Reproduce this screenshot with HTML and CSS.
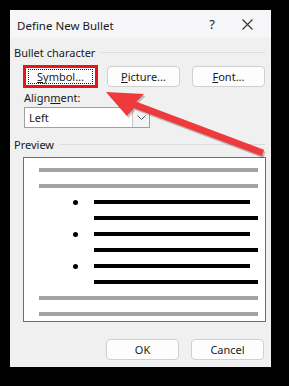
FILE: index.html
```html
<!DOCTYPE html>
<html lang="en">
  <head>
    <meta charset="UTF-8" />
    <title>Define New Bullet</title>
    <link rel="stylesheet" href="styles.css">
  </head>

  <body>
    <div class="dialog">
      <div class="titlebar">
        <span class="title">Define New Bullet</span>
        <span class="help">?</span>
        <span class="close">
          <svg width="11" height="11" viewBox="0 0 11 11">
            <path d="M0.5 0.5 L10.5 10.5 M10.5 0.5 L0.5 10.5" stroke="#333" stroke-width="1.1" fill="none" />
          </svg>
        </span>
      </div>

      <div class="content">
        <div class="group-head">
          <span>Bullet character</span>
          <span class="rule"></span>
        </div>

        <div class="btn-row">
          <div class="marked">
            <button class="btn focused"><span class="focus-ring"><u>S</u>ymbol...</span></button>
          </div>
          <button class="btn"><u>P</u>icture...</button>
          <button class="btn"><u>F</u>ont...</button>
        </div>

        <div class="align">
          <label>Align<u>m</u>ent:</label>
          <div class="select">
            <span class="select-text">Left</span>
            <span class="select-arrow">
              <svg width="9" height="6" viewBox="0 0 9 6">
                <path d="M0.5 0.5 L4.5 4.5 L8.5 0.5" stroke="#555" stroke-width="1" fill="none" />
              </svg>
            </span>
          </div>
        </div>

        <div class="group-head preview-head">
          <span>Preview</span>
          <span class="rule"></span>
        </div>

        <div class="preview">
          <div class="line gray"></div>
          <div class="line gray"></div>
          <div class="item"><span class="dot"></span><div class="line black short"></div></div>
          <div class="line black indent"></div>
          <div class="item"><span class="dot"></span><div class="line black short"></div></div>
          <div class="line black indent"></div>
          <div class="item"><span class="dot"></span><div class="line black short"></div></div>
          <div class="line black indent"></div>
          <div class="line gray"></div>
          <div class="line gray"></div>
        </div>

        <div class="footer">
          <button class="btn">OK</button>
          <button class="btn">Cancel</button>
        </div>
      </div>

      <!-- rod pil som peker paa Symbol-knappen -->
      <svg class="arrow" width="289" height="386" viewBox="0 0 289 386">
        <path d="M106 92 L144 94 L136.5 101.7 L264 149.7 L262 156.3 L134 108.3 L127 116 Z" fill="#000" opacity="0.22" transform="translate(1.5 2)" />
        <path d="M106 92 L144 94 L136.5 101.7 L264 149.7 L262 156.3 L134 108.3 L127 116 Z" fill="#ee3a3c" />
      </svg>
    </div>
  </body>
</html>
```

FILE: styles.css
```css
body {
  margin: 0;
  background-color: #000;
  font-family: "Noto Sans", "Open Sans", sans-serif;
  font-size: 11px;
  color: #1a1a1a;
}

.dialog {
  position: relative;
  margin: 10px;
  width: 261px;
  height: 357px;
  background-color: #f0f0f0;
  display: flex;
  flex-direction: column;
}

.titlebar {
  height: 28px;
  display: flex;
  align-items: center;
  padding-left: 7px;
  background-color: #f6f6f8;
}

.title {
  flex: 1;
  font-size: 11.5px;
  padding-top: 2px;
}

.help {
  width: 20px;
  text-align: center;
  margin-right: 20px;
  font-size: 13px;
}

.close {
  width: 11px;
  margin-right: 18px;
  display: flex;
}

.content {
  padding: 0 6px 0 4px;
  display: flex;
  flex-direction: column;
}

.group-head {
  display: flex;
  align-items: center;
  gap: 6px;
  margin-top: 6px;
  height: 16px;
}

.group-head .rule {
  flex: 1;
  border-top: 1px solid #dcdcdc;
}

.btn-row {
  display: flex;
  gap: 12px;
  margin-top: 6px;
  padding-left: 10px;
}

.btn {
  width: 73px;
  height: 21px;
  padding: 0;
  font: inherit;
  color: #1a1a1a;
  background-color: #fdfdfd;
  border: 1px solid #d0d0d0;
  border-radius: 4px;
}

.marked {
  outline: 3px solid #e4161b;
  outline-offset: -2px;
  margin-right: -2px;
  display: flex;
}

.focused {
  border-radius: 0;
  border-color: #fff;
  display: flex;
  padding: 2px 3px;
}

.focus-ring {
  flex: 1;
  border: 1px dotted #222;
  line-height: 13px;
}

.align {
  margin-top: 3px;
  padding-left: 10px;
}

.align label {
  display: block;
  line-height: 16px;
}

.select {
  margin-top: 1px;
  width: 124px;
  height: 19px;
  display: flex;
  background-color: #fff;
  border: 1px solid #a0a0a0;
}

.select-text {
  flex: 1;
  padding-left: 4px;
  line-height: 19px;
}

.select-arrow {
  width: 16px;
  border-left: 1px solid #c8c8c8;
  background-color: #f4f4f4;
  display: flex;
  align-items: center;
  justify-content: center;
}

.preview-head {
  margin-top: 8px;
}

.preview {
  margin: 5px 0 0 9px;
  width: 243px;
  height: 165px;
  background-color: #fff;
  border: 1px solid #6e6e6e;
  box-sizing: border-box;
  padding: 10px 7px 0 15px;
  display: flex;
  flex-direction: column;
  gap: 12px;
}

.line {
  height: 4px;
}

.gray {
  background-color: #a3a3a3;
}

.black {
  background-color: #000;
}

.item {
  display: flex;
  align-items: center;
  height: 4px;
}

.dot {
  width: 5px;
  height: 5px;
  border-radius: 50%;
  background-color: #000;
  margin-left: 34px;
  margin-right: 16px;
}

.short {
  width: 156px;
}

.indent {
  margin-left: 55px;
}

.footer {
  display: flex;
  justify-content: flex-end;
  gap: 12px;
  margin-top: 17px;
  padding-right: 1px;
}

.arrow {
  position: absolute;
  left: -10px;
  top: -10px;
  pointer-events: none;
}
```
